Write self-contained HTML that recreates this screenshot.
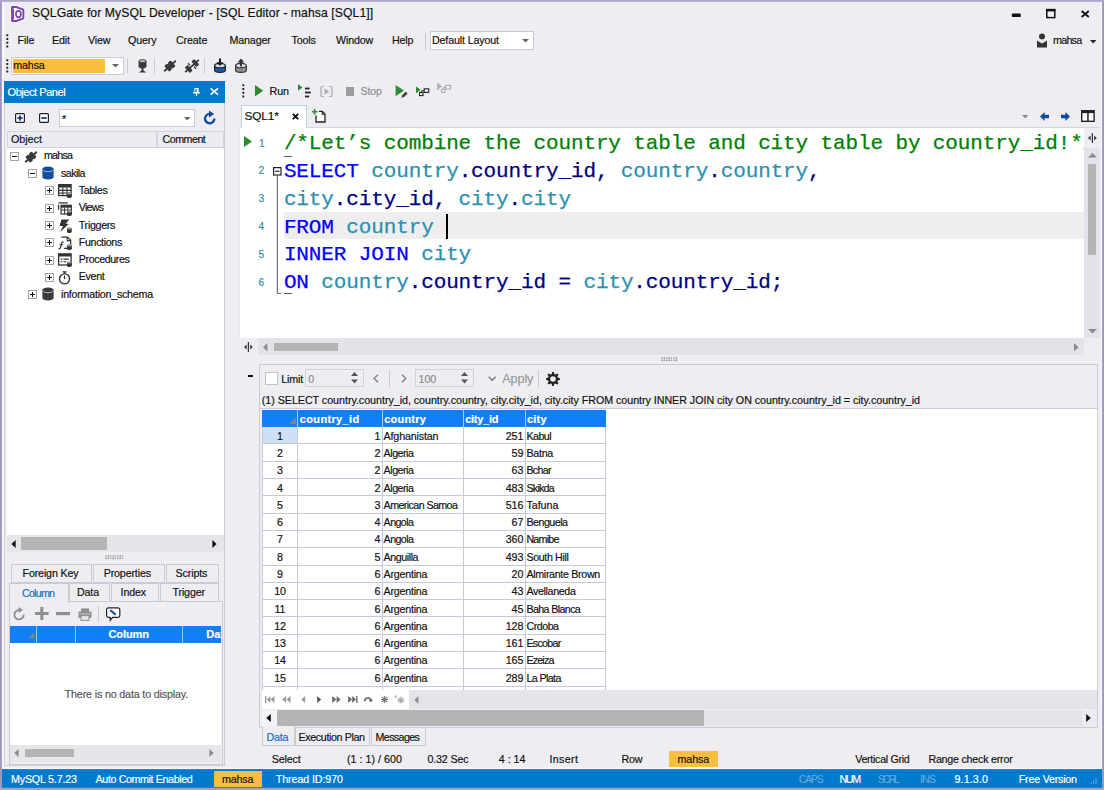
<!DOCTYPE html>
<html lang="en">
<head>
<meta charset="utf-8">
<title>SQLGate for MySQL Developer - [SQL Editor - mahsa [SQL1]]</title>
<style>
*{box-sizing:border-box;margin:0;padding:0}
html,body{width:1104px;height:790px;overflow:hidden}
body{background:#eeeef2;font-family:"Liberation Sans",sans-serif;font-size:10.7px;letter-spacing:-0.15px;color:#111;-webkit-text-stroke:0.18px;position:relative}
.t{position:absolute;white-space:nowrap;line-height:14px;height:14px}
.r{position:absolute}
header,nav,aside,main,section,footer{display:block}
svg{position:absolute;overflow:visible}
.code{position:absolute;white-space:pre;font-family:"Liberation Mono",monospace;font-size:21px;letter-spacing:-0.122px;line-height:28px;height:28px;left:283.9px;-webkit-text-stroke:0.25px}
.kw{color:#0000ff} .id{color:#2b91af} .cm{color:#008000} .op{color:#000080}
.cell{position:absolute;white-space:nowrap;line-height:14px;height:14px}
</style>
</head>
<body>
<div id="window-frame">
<svg style="left:0;top:0" width="1104" height="790" viewBox="0 0 1104 790"><rect x="1.8" y="1.8" width="2.15" height="786" fill="#f7f7fb"/><rect x="1100.9" y="1.8" width="1.3" height="786" fill="#f7f7fb"/><rect x="1.8" y="767.6" width="1100.4" height="1.6" fill="#f7f7fb"/><rect x="0" y="0" width="1.85" height="790" fill="#9a98bd"/><rect x="1102.1" y="0" width="1.9" height="790" fill="#9a98bd"/><rect x="0" y="0" width="1104" height="1.8" fill="#a8a6ca"/><rect x="0" y="787.9" width="1104" height="2.1" fill="#a7a3bd"/></svg>
</div>
<header id="title-bar">
<svg style="left:10px;top:5px" width="16" height="18" viewBox="0 0 16 18">
  <path d="M2 2 H6.2 L13.4 4.7 V13.3 L6.2 16 H2 Z" fill="#fff" stroke="#fff" stroke-width="3.4" stroke-linejoin="round"/>
  <path d="M2 2 H6.2 L13.4 4.7 V13.3 L6.2 16 H2 Z" fill="#fbf8fd" stroke="#7d42b4" stroke-width="1.9" stroke-linejoin="round"/>
  <path d="M3.4 3.6 V14.4" stroke="#7d42b4" stroke-width="1.2"/>
  <ellipse cx="8.4" cy="9.1" rx="2.5" ry="3.3" fill="#fff" stroke="#7d42b4" stroke-width="1.7"/>
</svg>
<div class="t" style="top:5.00px;left:32.00px;font-size:12.2px;line-height:16px;height:16px;letter-spacing:0.085px;">SQLGate for MySQL Developer - [SQL Editor - mahsa [SQL1]]</div>
<svg style="left:1011px;top:8px" width="90" height="12" viewBox="0 0 90 12">
  <rect x="0.8" y="5.6" width="9" height="3.4" rx="0.8" fill="#111"/>
  <rect x="35.8" y="1.6" width="8" height="8" fill="none" stroke="#111" stroke-width="1.5"/>
  <rect x="35.2" y="1" width="9.2" height="2.4" fill="#111"/>
  <path d="M70.6 3 L77.8 9 M77.8 3 L70.6 9" stroke="#111" stroke-width="1.9" fill="none"/>
</svg>
</header>
<nav id="menu-bar">
<svg style="left:5.8px;top:34.2px" width="3" height="14" viewBox="0 0 3 14"><rect x="0.3" y="0.20" width="2" height="2" rx="0.4" fill="#222"/><rect x="0.3" y="3.95" width="2" height="2" rx="0.4" fill="#222"/><rect x="0.3" y="7.70" width="2" height="2" rx="0.4" fill="#222"/><rect x="0.3" y="11.45" width="2" height="2" rx="0.4" fill="#222"/></svg>
<div class="t" style="top:33.00px;left:17.60px;">File</div>
<div class="t" style="top:33.00px;left:52.00px;">Edit</div>
<div class="t" style="top:33.00px;left:88.00px;">View</div>
<div class="t" style="top:33.00px;left:128.00px;">Query</div>
<div class="t" style="top:33.00px;left:176.00px;">Create</div>
<div class="t" style="top:33.00px;left:229.50px;">Manager</div>
<div class="t" style="top:33.00px;left:291.50px;">Tools</div>
<div class="t" style="top:33.00px;left:336.00px;">Window</div>
<div class="t" style="top:33.00px;left:392.00px;">Help</div>
<div class="r" style="left:425px;top:33px;width:1px;height:17px;background:#c9c9d6;"></div>
<div class="r" style="left:430px;top:31px;width:104px;height:19px;background:#fff;border:1px solid #c9cbdb;"></div>
<div class="t" style="top:33.00px;left:432.00px;">Default Layout</div>
<svg style="left:522px;top:38.5px" width="7" height="4" viewBox="0 0 7 4"><path d="M0 0 H7 L3.5 3.6 Z" fill="#666"/></svg>
<svg style="left:1036px;top:33px" width="12" height="15" viewBox="0 0 12 15">
  <circle cx="6" cy="3.4" r="3" fill="#333"/>
  <path d="M1 7.4 L6 10.5 L11 7.4 V14.6 H1 Z" fill="#333"/>
</svg>
<div class="t" style="top:33.00px;left:1053.00px;letter-spacing:-0.729px;">mahsa</div>
<svg style="left:1090px;top:40px" width="6" height="4" viewBox="0 0 6 4"><path d="M0 0 H6.4 L3.2 3.4 Z" fill="#222"/></svg>
</nav>
<div id="connection-toolbar">
<svg style="left:5.8px;top:58.8px" width="3" height="14" viewBox="0 0 3 14"><rect x="0.3" y="0.20" width="2" height="2" rx="0.4" fill="#222"/><rect x="0.3" y="3.95" width="2" height="2" rx="0.4" fill="#222"/><rect x="0.3" y="7.70" width="2" height="2" rx="0.4" fill="#222"/><rect x="0.3" y="11.45" width="2" height="2" rx="0.4" fill="#222"/></svg>
<div class="r" style="left:11px;top:57px;width:113px;height:18px;background:#fff;border:1px solid #c9cbdb;"></div>
<div class="r" style="left:13px;top:58.5px;width:92px;height:14px;background:#fcbe3e;"></div>
<div class="t" style="top:58.00px;left:13.30px;">mahsa</div>
<svg style="left:112px;top:64px" width="7" height="4" viewBox="0 0 7 4"><path d="M0 0 H7 L3.5 3.6 Z" fill="#666"/></svg>
<div class="r" style="left:127px;top:58px;width:1px;height:16px;background:#cdcddb;"></div>
<svg style="left:137.5px;top:58.6px" width="9" height="14" viewBox="0 0 9 14">
  <path d="M0.5 2 V7.6 A4 1.8 0 0 0 8.5 7.6 V2 Z" fill="#3a3a3a"/>
  <ellipse cx="4.5" cy="2.1" rx="3.6" ry="1.5" fill="#c4c4c4" stroke="#3a3a3a" stroke-width="0.9"/>
  <rect x="3.6" y="9" width="1.8" height="2.6" fill="#333"/>
  <path d="M0.8 13.4 L4.5 10.8 L8.2 13.4 Z" fill="#333"/>
</svg>
<div class="r" style="left:154.4px;top:58px;width:1px;height:16px;background:#cdcddb;"></div>
<svg style="left:164px;top:60px" width="12" height="12" viewBox="0 0 12 12"><g transform="rotate(-42 6 6)" fill="#3a3a3a"><rect x="-1.8" y="5.1" width="15.6" height="1.8"/><rect x="1.6" y="2.2" width="4" height="7.6" rx="1"/><rect x="6.2" y="2.2" width="4" height="7.6" rx="1"/><rect x="5" y="3.4" width="2" height="5.2"/></g></svg>
<svg style="left:185px;top:59px" width="14" height="14" viewBox="0 0 14 14"><g transform="rotate(-42 7 7)" fill="#3a3a3a"><rect x="-2.2" y="6.1" width="18.4" height="1.8"/><rect x="0.6" y="3.2" width="4" height="7.6" rx="1"/><rect x="9.4" y="3.2" width="4" height="7.6" rx="1"/><rect x="5.2" y="2.2" width="1.4" height="3"/><rect x="7.4" y="8.8" width="1.4" height="3"/></g></svg>
<div class="r" style="left:204.3px;top:58px;width:1px;height:16px;background:#cdcddb;"></div>
<svg style="left:213.6px;top:57.6px" width="12" height="15" viewBox="0 0 12 15">
  <path d="M0.6 7.6 V12.2 A5.4 2.2 0 0 0 11.4 12.2 V7.6 Z" fill="#1f5aa8" stroke="#1c1c1c" stroke-width="1.1"/>
  <ellipse cx="6" cy="7.6" rx="5.4" ry="2.2" fill="#e6e6ee" stroke="#1c1c1c" stroke-width="1.1"/>
  <path d="M5 0.6 H7 V4.2 H9.4 L6 8 L2.6 4.2 H5 Z" fill="#1c1c1c"/>
</svg>
<svg style="left:235.4px;top:57.6px" width="12" height="15" viewBox="0 0 12 15">
  <path d="M0.6 7.6 V12.2 A5.4 2.2 0 0 0 11.4 12.2 V7.6 Z" fill="#8d8d8d" stroke="#333" stroke-width="1.1"/>
  <ellipse cx="6" cy="7.6" rx="5.4" ry="2.2" fill="#e6e6ee" stroke="#333" stroke-width="1.1"/>
  <path d="M5 8.4 H7 V4.4 H9.4 L6 0.4 L2.6 4.4 H5 Z" fill="#333"/>
</svg>
</div>
<aside id="object-panel">
<div class="r" style="left:4px;top:81px;width:221.4px;height:685px;background:#eeeef2;border:1px solid #ccced9;"></div>
<div class="r" style="left:4px;top:81px;width:221.2px;height:21.6px;background:#007acc;"></div>
<div class="t" style="top:85.00px;left:7.60px;font-size:11px;line-height:14px;height:14px;color:#fff;letter-spacing:-0.453px;">Object Panel</div>
<svg style="left:192.6px;top:88px" width="7" height="8" viewBox="0 0 7 8"><path d="M1.4 0 H5.6 V4.2 H7 V5.4 H4.1 V8 H2.9 V5.4 H0 V4.2 H1.4 Z" fill="#fff"/><rect x="2.4" y="1" width="1.3" height="3.2" fill="#007acc"/></svg>
<svg style="left:210px;top:88.2px" width="8.6" height="7" viewBox="0 0 8.6 7"><path d="M0.6 0.3 L8 6.7 M8 0.3 L0.6 6.7" stroke="#fff" stroke-width="1.7" fill="none"/></svg>
<svg style="left:15px;top:112.6px" width="10" height="10" viewBox="0 0 10 10"><rect x="0.6" y="0.6" width="8.8" height="8.8" rx="1" fill="#fff" stroke="#222" stroke-width="1.2"/><rect x="2.4" y="4.1" width="5.2" height="1.8" fill="#0d3e8e"/><rect x="4.1" y="2.4" width="1.8" height="5.2" fill="#0d3e8e"/></svg>
<svg style="left:38.6px;top:112.6px" width="10" height="10" viewBox="0 0 10 10"><rect x="0.6" y="0.6" width="8.8" height="8.8" rx="1" fill="#fff" stroke="#222" stroke-width="1.2"/><rect x="2.4" y="4.1" width="5.2" height="1.8" fill="#0d3e8e"/></svg>
<div class="r" style="left:59px;top:109px;width:136px;height:18px;background:#fff;border:1px solid #c9cbdb;"></div>
<div class="t" style="top:112.00px;left:62.00px;">*</div>
<svg style="left:183.6px;top:116.9px" width="6.2" height="3.8" viewBox="0 0 6.2 3.8"><path d="M0 0 H6.4 L3.2 3.4 Z" fill="#666"/></svg>
<svg style="left:203.4px;top:110.6px" width="14" height="14" viewBox="0 0 14 14"><path d="M11.4 7.6 A4.7 4.7 0 1 1 6.8 2.9" fill="none" stroke="#114a9c" stroke-width="2.3"/><path d="M6 -0.6 L11.2 3 L6 6.6 Z" fill="#114a9c"/></svg>
<div class="r" style="left:7px;top:131px;width:217px;height:17px;background:#ebebf1;border:1px solid #d4d4e0;"></div>
<div class="r" style="left:156px;top:131px;width:2px;height:17px;background:#eeeef2;border-left:1px solid #d4d4e0;border-right:1px solid #d4d4e0;"></div>
<div class="t" style="top:132.00px;left:11.00px;letter-spacing:-0.005px;">Object</div>
<div class="t" style="top:132.00px;left:162.50px;letter-spacing:-0.497px;">Comment</div>
<div class="r" style="left:7px;top:148px;width:217px;height:387px;background:#fff;"></div>
<svg style="left:10.3px;top:151.8px" width="9" height="9" viewBox="0 0 9 9"><rect x="0.5" y="0.5" width="8" height="8" fill="#fff" stroke="#a4a4a4" stroke-width="1"/><rect x="2" y="4" width="5" height="1" fill="#111"/></svg>
<svg style="left:25px;top:150.8px" width="12" height="12" viewBox="0 0 12 12"><g transform="rotate(-42 6 6)" fill="#3a3a3a"><rect x="-1.8" y="5.1" width="15.6" height="1.8"/><rect x="1.6" y="2.2" width="4" height="7.6" rx="1"/><rect x="6.2" y="2.2" width="4" height="7.6" rx="1"/><rect x="5" y="3.4" width="2" height="5.2"/></g></svg>
<div class="t" style="top:148.00px;left:43.90px;letter-spacing:-0.729px;">mahsa</div>
<svg style="left:27.7px;top:169.1px" width="9" height="9" viewBox="0 0 9 9"><rect x="0.5" y="0.5" width="8" height="8" fill="#fff" stroke="#a4a4a4" stroke-width="1"/><rect x="2" y="4" width="5" height="1" fill="#111"/></svg>
<svg style="left:42px;top:166.1px" width="12" height="14" viewBox="0 0 12 14"><path d="M0.4 3 V11 A5.6 2.6 0 0 0 11.6 11 V3 Z" fill="#154c9a"/><ellipse cx="6" cy="3" rx="5.6" ry="2.6" fill="#154c9a"/><path d="M1 3.6 A5 2.1 0 0 0 11 3.6" fill="none" stroke="#9fc0ea" stroke-width="0.9"/></svg>
<div class="t" style="top:166.00px;left:61.00px;letter-spacing:-0.571px;">sakila</div>
<svg style="left:45px;top:186.4px" width="9" height="9" viewBox="0 0 9 9"><rect x="0.5" y="0.5" width="8" height="8" fill="#fff" stroke="#a4a4a4" stroke-width="1"/><rect x="2" y="4" width="5" height="1" fill="#111"/><rect x="4" y="2" width="1" height="5" fill="#111"/></svg>
<svg style="left:58.4px;top:184.2px" width="14.2" height="14.2" viewBox="0 0 13 13"><rect x="0.6" y="0.6" width="11.4" height="10" fill="#fff" stroke="#333" stroke-width="1.2"/><rect x="0.6" y="0.6" width="11.4" height="2.6" fill="#333"/><path d="M0.6 5.8 H12 M0.6 8.2 H12 M4.4 3 V10.6 M8.2 3 V10.6" stroke="#333" stroke-width="1"/><g transform="translate(8.2,7.4)"><path d="M0 1.2 V4.4 A2.2 1 0 0 0 4.4 4.4 V1.2 Z" fill="#333"/><ellipse cx="2.2" cy="1.2" rx="2.2" ry="1" fill="#999"/></g></svg>
<div class="t" style="top:183.00px;left:78.80px;letter-spacing:-0.386px;">Tables</div>
<svg style="left:45px;top:203.7px" width="9" height="9" viewBox="0 0 9 9"><rect x="0.5" y="0.5" width="8" height="8" fill="#fff" stroke="#a4a4a4" stroke-width="1"/><rect x="2" y="4" width="5" height="1" fill="#111"/><rect x="4" y="2" width="1" height="5" fill="#111"/></svg>
<svg style="left:58.4px;top:201.5px" width="14.2" height="14.2" viewBox="0 0 13 13"><path d="M0.5 0.8 H9 M0.5 2.6 V7" stroke="#333" stroke-width="1.2" fill="none"/><rect x="2.8" y="3" width="9.4" height="8" fill="#fff" stroke="#333" stroke-width="1.1"/><rect x="2.8" y="3" width="9.4" height="2.2" fill="#333"/><path d="M2.8 7.4 H12 M6 5 V11 M9 5 V11" stroke="#333" stroke-width="0.9"/><g transform="translate(8.2,7.4)"><path d="M0 1.2 V4.4 A2.2 1 0 0 0 4.4 4.4 V1.2 Z" fill="#333"/><ellipse cx="2.2" cy="1.2" rx="2.2" ry="1" fill="#999"/></g></svg>
<div class="t" style="top:200.00px;left:78.80px;letter-spacing:-0.762px;">Views</div>
<svg style="left:45px;top:221.0px" width="9" height="9" viewBox="0 0 9 9"><rect x="0.5" y="0.5" width="8" height="8" fill="#fff" stroke="#a4a4a4" stroke-width="1"/><rect x="2" y="4" width="5" height="1" fill="#111"/><rect x="4" y="2" width="1" height="5" fill="#111"/></svg>
<svg style="left:58.4px;top:218.8px" width="14.2" height="14.2" viewBox="0 0 13 13"><path d="M3.2 0.4 H10.4 L7 4.4 H10 L2 12 L4.6 6.4 H1.4 Z" fill="#333"/><g transform="translate(8.2,7.4)"><path d="M0 1.2 V4.4 A2.2 1 0 0 0 4.4 4.4 V1.2 Z" fill="#333"/><ellipse cx="2.2" cy="1.2" rx="2.2" ry="1" fill="#999"/></g></svg>
<div class="t" style="top:218.00px;left:78.80px;letter-spacing:-0.306px;">Triggers</div>
<svg style="left:45px;top:238.2px" width="9" height="9" viewBox="0 0 9 9"><rect x="0.5" y="0.5" width="8" height="8" fill="#fff" stroke="#a4a4a4" stroke-width="1"/><rect x="2" y="4" width="5" height="1" fill="#111"/><rect x="4" y="2" width="1" height="5" fill="#111"/></svg>
<svg style="left:58.4px;top:236.0px" width="14.2" height="14.2" viewBox="0 0 13 13"><path d="M3 1 H8.6 L11.6 4 V11.4 H5.4" fill="none" stroke="#333" stroke-width="1.1"/><path d="M8.4 1 V4.2 H11.6" fill="none" stroke="#333" stroke-width="1"/><path d="M0.4 11.6 C2.2 12 2.4 10.6 2.8 8.6 C3.2 6.4 3.4 5.2 5.2 5.6 M1.4 8 H4.6" stroke="#333" stroke-width="1.1" fill="none"/><g transform="translate(8.2,7.4)"><path d="M0 1.2 V4.4 A2.2 1 0 0 0 4.4 4.4 V1.2 Z" fill="#333"/><ellipse cx="2.2" cy="1.2" rx="2.2" ry="1" fill="#999"/></g></svg>
<div class="t" style="top:235.00px;left:78.80px;letter-spacing:-0.361px;">Functions</div>
<svg style="left:45px;top:255.5px" width="9" height="9" viewBox="0 0 9 9"><rect x="0.5" y="0.5" width="8" height="8" fill="#fff" stroke="#a4a4a4" stroke-width="1"/><rect x="2" y="4" width="5" height="1" fill="#111"/><rect x="4" y="2" width="1" height="5" fill="#111"/></svg>
<svg style="left:58.4px;top:253.3px" width="14.2" height="14.2" viewBox="0 0 13 13"><rect x="0.6" y="0.8" width="11.4" height="10.2" fill="#fff" stroke="#333" stroke-width="1.2"/><rect x="0.6" y="0.8" width="11.4" height="2.4" fill="#333"/><path d="M2.4 5.6 H4 M5 5.6 H9.8 M2.4 8 H4 M5 8 H7.4" stroke="#333" stroke-width="1.1"/><g transform="translate(8.2,7.4)"><path d="M0 1.2 V4.4 A2.2 1 0 0 0 4.4 4.4 V1.2 Z" fill="#333"/><ellipse cx="2.2" cy="1.2" rx="2.2" ry="1" fill="#999"/></g></svg>
<div class="t" style="top:252.00px;left:78.80px;letter-spacing:-0.402px;">Procedures</div>
<svg style="left:45px;top:272.8px" width="9" height="9" viewBox="0 0 9 9"><rect x="0.5" y="0.5" width="8" height="8" fill="#fff" stroke="#a4a4a4" stroke-width="1"/><rect x="2" y="4" width="5" height="1" fill="#111"/><rect x="4" y="2" width="1" height="5" fill="#111"/></svg>
<svg style="left:58.4px;top:270.6px" width="14.2" height="14.2" viewBox="0 0 13 13"><circle cx="6" cy="7.2" r="4.6" fill="#fff" stroke="#333" stroke-width="1.3"/><path d="M6 7.4 V4.2" stroke="#333" stroke-width="1.2"/><path d="M4.2 0.8 H7.8 M6 0.8 V2.6" stroke="#333" stroke-width="1.3"/></svg>
<div class="t" style="top:269.00px;left:78.80px;letter-spacing:-0.34px;">Event</div>
<svg style="left:27.7px;top:290.1px" width="9" height="9" viewBox="0 0 9 9"><rect x="0.5" y="0.5" width="8" height="8" fill="#fff" stroke="#a4a4a4" stroke-width="1"/><rect x="2" y="4" width="5" height="1" fill="#111"/><rect x="4" y="2" width="1" height="5" fill="#111"/></svg>
<svg style="left:42px;top:287.1px" width="12" height="14" viewBox="0 0 12 14"><path d="M0.4 3 V11 A5.6 2.6 0 0 0 11.6 11 V3 Z" fill="#3a3a3a"/><ellipse cx="6" cy="3" rx="5.6" ry="2.6" fill="#3a3a3a"/><path d="M1 3.6 A5 2.1 0 0 0 11 3.6" fill="none" stroke="#c8c8c8" stroke-width="0.9"/></svg>
<div class="t" style="top:287.00px;left:61.00px;letter-spacing:-0.244px;">information_schema</div>
<div class="r" style="left:7px;top:535px;width:217px;height:17px;background:#e6e6ea;"></div>
<svg style="left:11px;top:539.5px" width="5" height="8" viewBox="0 0 5 8"><path d="M4.6 0 V8 L0.4 4 Z" fill="#111"/></svg>
<svg style="left:212px;top:539.5px" width="5" height="8" viewBox="0 0 5 8"><path d="M0.4 0 V8 L4.6 4 Z" fill="#111"/></svg>
<div class="r" style="left:21px;top:537px;width:86px;height:13px;background:#b4b4b4;"></div>
<div class="r" style="left:105px;top:555px;width:19px;height:5px;background-image:radial-gradient(circle at 1px 1px,#9a9aa6 0.7px,transparent 0.9px);background-size:2.4px 2.4px;"></div>
</aside>
<aside id="detail-panel">
<div class="r" style="left:9px;top:601px;width:214px;height:164px;background:#eeeef2;border:1px solid #c9cbdb;"></div>
<div class="r" style="left:10.5px;top:563.5px;width:81px;height:19px;background:#eeeef2;border:1px solid #c9cbdb;"></div>
<div class="t" style="top:566.00px;left:22.50px;">Foreign Key</div>
<div class="r" style="left:92.5px;top:563.5px;width:72px;height:19px;background:#eeeef2;border:1px solid #c9cbdb;"></div>
<div class="t" style="top:566.00px;left:103.70px;">Properties</div>
<div class="r" style="left:165.5px;top:563.5px;width:53px;height:19px;background:#eeeef2;border:1px solid #c9cbdb;"></div>
<div class="t" style="top:566.00px;left:175.60px;">Scripts</div>
<div class="r" style="left:68.5px;top:582.5px;width:41.5px;height:19px;background:#eeeef2;border:1px solid #c9cbdb;"></div>
<div class="t" style="top:585.00px;left:77.00px;">Data</div>
<div class="r" style="left:110.5px;top:582.5px;width:48px;height:19px;background:#eeeef2;border:1px solid #c9cbdb;"></div>
<div class="t" style="top:585.00px;left:120.60px;">Index</div>
<div class="r" style="left:159.5px;top:582.5px;width:59px;height:19px;background:#eeeef2;border:1px solid #c9cbdb;"></div>
<div class="t" style="top:585.00px;left:172.50px;">Trigger</div>
<div class="r" style="left:9px;top:582.5px;width:59.5px;height:20px;background:#eeeef2;border:1px solid #c9cbdb;border-bottom:none;"></div>
<div class="t" style="top:586.00px;left:22.00px;color:#0e70c0;letter-spacing:-0.774px;">Column</div>
<svg style="left:13px;top:607px" width="13" height="14" viewBox="0 0 13 14"><path d="M10.8 7.6 A4.7 4.7 0 1 1 6.2 3" fill="none" stroke="#8f8f8f" stroke-width="1.8"/><path d="M5.6 0 L10 3 L5.6 6 Z" fill="#8f8f8f"/></svg>
<svg style="left:34.5px;top:607px" width="14" height="13" viewBox="0 0 14 13"><rect x="0" y="5" width="13.6" height="3" fill="#8f8f8f"/><rect x="5.3" y="0" width="3" height="13" fill="#8f8f8f"/></svg>
<svg style="left:56px;top:611px" width="14" height="5" viewBox="0 0 14 5"><rect x="0" y="1" width="14" height="3.2" fill="#8f8f8f"/></svg>
<svg style="left:78px;top:607.6px" width="14" height="13" viewBox="0 0 14 13"><rect x="3" y="0.4" width="8" height="4" fill="#8f8f8f"/><rect x="0.4" y="3.6" width="13.2" height="6.4" rx="1" fill="#8f8f8f"/><rect x="3" y="7.6" width="8" height="4.8" fill="#e4e4e8" stroke="#8f8f8f" stroke-width="1"/><rect x="1" y="5.4" width="12" height="1" fill="#c4c4c4"/></svg>
<div class="r" style="left:98px;top:606px;width:1px;height:16px;background:#c9c9d6;"></div>
<svg style="left:105.5px;top:607px" width="15" height="15" viewBox="0 0 15 15"><path d="M2.4 0.8 H12 A1.8 1.8 0 0 1 13.8 2.6 V8.6 A1.8 1.8 0 0 1 12 10.4 H6.6 L4.2 13.4 V10.4 H2.4 A1.8 1.8 0 0 1 0.6 8.6 V2.6 A1.8 1.8 0 0 1 2.4 0.8 Z" fill="#fff" stroke="#222" stroke-width="1.2"/><path d="M4.2 3 L9.6 7.6" stroke="#1a4f9c" stroke-width="2.2"/><path d="M10.4 8.4 L9 7 L10.6 8.8Z" fill="#222"/></svg>
<div class="r" style="left:9.7px;top:625.6px;width:211px;height:120px;background:#fff;"></div>
<div class="r" style="left:9.7px;top:625.6px;width:211px;height:17.1px;background:#0f80fa;"></div>
<div class="r" style="left:36.3px;top:625.6px;width:1.2px;height:17.1px;background:#9cc4f4;"></div>
<div class="r" style="left:74.9px;top:625.6px;width:1.2px;height:17.1px;background:#9cc4f4;"></div>
<div class="r" style="left:182.1px;top:625.6px;width:1.2px;height:17.1px;background:#9cc4f4;"></div>
<svg style="left:28px;top:632px" width="7" height="7" viewBox="0 0 7 7"><path d="M6.4 0.4 V6.4 H0.4 Z" fill="#8a8478"/></svg>
<div class="t" style="top:627.00px;left:108.50px;font-size:11px;line-height:14px;height:14px;color:#fff;letter-spacing:-0.1px;font-weight:bold;">Column</div>
<div class="r" style="left:183.3px;top:625.6px;width:37.4px;height:16.7px;overflow:hidden"><div class="t" style="left:23px;top:1.6px;color:#fff;font-weight:bold;font-size:11px;letter-spacing:-0.1px">Data Type</div></div>
<div class="t" style="top:687.00px;left:64.70px;color:#555;">There is no data to display.</div>
<div class="r" style="left:9.7px;top:745px;width:211px;height:16.5px;background:#e6e6ea;"></div>
<svg style="left:14px;top:749.3px" width="5" height="8" viewBox="0 0 5 8"><path d="M4.6 0 V8 L0.4 4 Z" fill="#8a8a8a"/></svg>
<svg style="left:209px;top:749.3px" width="5" height="8" viewBox="0 0 5 8"><path d="M0.4 0 V8 L4.6 4 Z" fill="#8a8a8a"/></svg>
<div class="r" style="left:25px;top:749px;width:49px;height:8.4px;background:#b4b4b4;"></div>
</aside>
<div id="sql-toolbar">
<svg style="left:242.4px;top:83.8px" width="3" height="14" viewBox="0 0 3 14"><rect x="0.3" y="0.20" width="2" height="2" rx="0.4" fill="#222"/><rect x="0.3" y="3.95" width="2" height="2" rx="0.4" fill="#222"/><rect x="0.3" y="7.70" width="2" height="2" rx="0.4" fill="#222"/><rect x="0.3" y="11.45" width="2" height="2" rx="0.4" fill="#222"/></svg>
<svg style="left:254.6px;top:85.4px" width="8.2" height="11.4" viewBox="0 0 8.2 11.4"><path d="M0 0 L8.2 5.7 L0 11.4 Z" fill="#2f8a2f"/></svg>
<div class="t" style="top:84.00px;left:269.60px;">Run</div>
<svg style="left:297.8px;top:84px" width="13" height="13" viewBox="0 0 13 13"><path d="M0 0 L4.4 3.4 L0 6.8 Z" fill="#2f8a2f"/><rect x="7" y="3.6" width="4.6" height="1.8" fill="#222"/><rect x="7" y="7.6" width="5.8" height="1.8" fill="#222"/><rect x="7" y="11.6" width="4.2" height="1.8" fill="#222"/></svg>
<svg style="left:320px;top:86px" width="13" height="11" viewBox="0 0 13 11"><path d="M3.6 0.5 H2.2 Q1 0.5 1 1.8 V9.2 Q1 10.5 2.2 10.5 H3.6 M9.4 0.5 H10.8 Q12 0.5 12 1.8 V9.2 Q12 10.5 10.8 10.5 H9.4" fill="none" stroke="#a2a2a2" stroke-width="1.1"/><path d="M4.6 2.4 L9.2 5.5 L4.6 8.6 Z" fill="#a8a8a8"/></svg>
<div class="r" style="left:345.6px;top:87px;width:8.6px;height:8.6px;background:#9c9c9c;"></div>
<div class="t" style="top:84.00px;left:360.50px;color:#8c8c8c;">Stop</div>
<svg style="left:394.6px;top:85px" width="13" height="13" viewBox="0 0 13 13"><path d="M0.6 0 L9 5.6 L0.6 11.2 Z" fill="#2f8a2f"/><path d="M6.4 12.8 L7.2 10.2 L10.6 6.8 L12.6 8.6 L9 12 Z" fill="#3a3a3a"/></svg>
<svg style="left:416px;top:86px" width="14" height="12" viewBox="0 0 14 12"><path d="M0 0.4 L4.6 3.8 L0 7.2 Z" fill="#2f8a2f"/><rect x="8.2" y="2.8" width="4.6" height="3.6" fill="#f4f4f8" stroke="#222" stroke-width="1.1"/><rect x="3.6" y="6.4" width="3.4" height="3.2" fill="#f4f4f8" stroke="#222" stroke-width="1.1"/><path d="M5.6 6.2 V4.8 H8" fill="none" stroke="#222" stroke-width="1"/></svg>
<svg style="left:437px;top:83px" width="15" height="12" viewBox="0 0 15 12"><path d="M1 0.2 L5 3.4 L1 6.6 Z" fill="#b0b0b0"/><rect x="0.2" y="0" width="1" height="7" fill="#a8a8a8"/><rect x="8.8" y="2.4" width="4.8" height="3.6" fill="#f4f4f8" stroke="#a4a4a4" stroke-width="1"/><rect x="4.6" y="6.2" width="3.4" height="3.2" fill="#f4f4f8" stroke="#a4a4a4" stroke-width="1"/><path d="M6.4 6 V4.4 H8.6" fill="none" stroke="#a4a4a4" stroke-width="1"/></svg>
</div>
<div id="editor-tabs">
<div class="r" style="left:239px;top:127px;width:861px;height:1px;background:#d2d4e4;"></div>
<div class="r" style="left:240.7px;top:105.3px;width:66.3px;height:22.7px;background:#fff;border:1px solid #bfd0ea;border-bottom:none;"></div>
<div class="t" style="top:109.00px;left:244.50px;font-size:11.8px;line-height:15px;height:15px;letter-spacing:-0.1px;">SQL1*</div>
<svg style="left:292.2px;top:113.4px" width="7" height="7" viewBox="0 0 7 7"><path d="M0.8 0.8 L6.2 6.2 M6.2 0.8 L0.8 6.2" stroke="#111" stroke-width="1.9" fill="none"/></svg>
<svg style="left:311.5px;top:108.6px" width="14" height="14" viewBox="0 0 14 14"><path d="M2.6 0 V5.6 M0 2.8 H5.4" stroke="#2f8a2f" stroke-width="1.6"/><path d="M7 2.4 H10.4 L13 5 V13 H4 V6.6" fill="#fff" stroke="#222" stroke-width="1.3"/><path d="M10.2 2.4 V5.2 H13" fill="none" stroke="#222" stroke-width="1.1"/></svg>
<svg style="left:1022px;top:115px" width="7" height="4" viewBox="0 0 7 4"><path d="M0 0 H6.4 L3.2 3.4 Z" fill="#888"/></svg>
<svg style="left:1040px;top:111.6px" width="9" height="9" viewBox="0 0 9 9"><path d="M0 4.5 L4.6 0 V2.8 H9 V6.2 H4.6 V9 Z" fill="#124a9c"/></svg>
<svg style="left:1061.4px;top:111.6px" width="9" height="9" viewBox="0 0 9 9"><path d="M9 4.5 L4.4 0 V2.8 H0 V6.2 H4.4 V9 Z" fill="#124a9c"/></svg>
<svg style="left:1080.8px;top:110px" width="14" height="12" viewBox="0 0 14 12"><rect x="0.7" y="0.7" width="12.4" height="10.6" fill="#fff" stroke="#222" stroke-width="1.4"/><rect x="0.7" y="0.7" width="12.4" height="2.4" fill="#222"/><rect x="6.2" y="1" width="1.5" height="10" fill="#222"/></svg>
</div>
<main id="sql-editor">
<div class="r" style="left:239px;top:128px;width:861px;height:227px;background:#eeeef2;"></div>
<div class="r" style="left:239px;top:128px;width:1px;height:210px;background:#e4e7f2;"></div>
<div class="r" style="left:240px;top:128px;width:844px;height:210px;background:#fff;"></div>
<div class="r" style="left:283.5px;top:211.8px;width:800.5px;height:27.6px;background:#eeeeee;"></div>
<div class="r" style="left:446px;top:213.5px;width:1.6px;height:25.5px;background:#000;"></div>
<svg style="left:243.5px;top:136px" width="8" height="11" viewBox="0 0 8 11"><path d="M0 0 L8 5.5 L0 11 Z" fill="#2f8a2f"/></svg>
<div class="t" style="top:137.00px;left:259.00px;font-size:10.2px;line-height:13px;height:13px;color:#2b91af;letter-spacing:0px;">1</div>
<div class="t" style="top:164.00px;left:258.60px;font-size:10.2px;line-height:13px;height:13px;color:#2b91af;letter-spacing:0px;">2</div>
<div class="t" style="top:192.00px;left:258.60px;font-size:10.2px;line-height:13px;height:13px;color:#2b91af;letter-spacing:0px;">3</div>
<div class="t" style="top:220.00px;left:258.60px;font-size:10.2px;line-height:13px;height:13px;color:#2b91af;letter-spacing:0px;">4</div>
<div class="t" style="top:248.00px;left:258.60px;font-size:10.2px;line-height:13px;height:13px;color:#2b91af;letter-spacing:0px;">5</div>
<div class="t" style="top:276.00px;left:258.60px;font-size:10.2px;line-height:13px;height:13px;color:#2b91af;letter-spacing:0px;">6</div>
<svg style="left:273px;top:167px" width="9" height="128" viewBox="0 0 9 128"><rect x="0.6" y="0.6" width="7.4" height="7.4" fill="#fff" stroke="#222" stroke-width="1.2"/><rect x="2.2" y="3.7" width="4.2" height="1.2" fill="#222"/><path d="M4.3 8.4 V126.4 H8" fill="none" stroke="#555" stroke-width="1"/></svg>
<div class="r" style="left:284px;top:155.6px;width:7.6px;height:1px;background:#555;"></div>
<div class="r" style="left:284px;top:293px;width:7.6px;height:1px;background:#555;"></div>
<div class="r" style="left:240px;top:128px;width:844px;height:210px;overflow:hidden"><div style="position:absolute;left:-240px;top:-128px">
<div class="code" style="top:130px"><span class="cm">/*Let’s combine the country table and city table by country_id!*/</span></div>
<div class="code" style="top:158px"><span class="kw">SELECT</span><span class="id"> country</span><span class="op">.country_id,</span><span class="id"> country</span><span class="op">.</span><span class="id">country</span><span class="op">,</span></div>
<div class="code" style="top:186px"><span class="id">city</span><span class="op">.city_id,</span><span class="id"> city</span><span class="op">.</span><span class="id">city</span></div>
<div class="code" style="top:214px"><span class="kw">FROM</span><span class="id"> country </span></div>
<div class="code" style="top:241px"><span class="kw">INNER JOIN</span><span class="id"> city</span></div>
<div class="code" style="top:269px"><span class="kw">ON</span><span class="id"> country</span><span class="op">.country_id = </span><span class="id">city</span><span class="op">.country_id;</span></div>
</div></div>
<div class="r" style="left:1084px;top:128px;width:16px;height:20px;background:#eeeef2;"></div>
<svg style="left:1087.6px;top:133px" width="8.8" height="10" viewBox="0 0 10 10" preserveAspectRatio="none"><path d="M4.3 0 H5.7 V10 H4.3 Z M0 5 L3 2.4 V7.6 Z M10 5 L7 2.4 V7.6 Z" fill="#333"/></svg>
<div class="r" style="left:1084px;top:148px;width:16px;height:190px;background:#e2e2e8;"></div>
<svg style="left:1087.5px;top:153.4px" width="9" height="4.6" viewBox="0 0 9 4.6"><path d="M0 4.6 H9 L4.5 0 Z" fill="#8c8c8c"/></svg>
<svg style="left:1087.5px;top:328.8px" width="9" height="4.6" viewBox="0 0 9 4.6"><path d="M0 0 H9 L4.5 4.6 Z" fill="#8c8c8c"/></svg>
<div class="r" style="left:1088px;top:164px;width:8px;height:90.6px;background:#b4b4b4;"></div>
<div class="r" style="left:240px;top:338px;width:18px;height:17px;background:#eeeef2;"></div>
<svg style="left:243.6px;top:342.2px" width="8.8" height="10" viewBox="0 0 10 10" preserveAspectRatio="none"><path d="M4.3 0 H5.7 V10 H4.3 Z M0 5 L3 2.4 V7.6 Z M10 5 L7 2.4 V7.6 Z" fill="#333"/></svg>
<div class="r" style="left:258px;top:338px;width:826px;height:17px;background:#e2e2e8;"></div>
<svg style="left:263.2px;top:342.6px" width="4.6" height="8.4" viewBox="0 0 4.6 8.4"><path d="M4.4 0 V8.4 L0 4.2 Z" fill="#8c8c8c"/></svg>
<svg style="left:1074.2px;top:342.6px" width="4.4" height="8.4" viewBox="0 0 4.4 8.4"><path d="M0 0 V8.4 L4.4 4.2 Z" fill="#8c8c8c"/></svg>
<div class="r" style="left:274px;top:342.6px;width:63.5px;height:8.4px;background:#b4b4b4;"></div>
<div class="r" style="left:1084px;top:338px;width:16px;height:17px;background:#eeeef2;"></div>
<div class="r" style="left:661px;top:357px;width:17px;height:5px;background-image:radial-gradient(circle at 1px 1px,#9a9aa6 0.7px,transparent 0.9px);background-size:2.4px 2.4px;"></div>
</main>
<section id="result-panel">
<div class="r" style="left:259px;top:364px;width:839px;height:363.5px;background:#eeeef2;border:1px solid #c9cbdb;"></div>
<div class="r" style="left:260px;top:408.4px;width:837px;height:1px;background:#c9cbdb;"></div>
<div class="r" style="left:247.6px;top:375.4px;width:5.6px;height:1.8px;background:#111;"></div>
<div class="r" style="left:265.4px;top:372.4px;width:12.4px;height:12.4px;background:#fff;border:1px solid #c2c4d4;"></div>
<div class="t" style="top:372.00px;left:281.20px;">Limit</div>
<div class="r" style="left:305px;top:369px;width:58.6px;height:18.4px;background:#eeeef2;border:1px solid #d0d2de;"></div>
<div class="t" style="top:372.00px;left:308.20px;color:#8a8a8a;">0</div>
<svg style="left:351.1px;top:372.4px" width="7" height="12" viewBox="0 0 7 12"><path d="M0 4 H7 L3.5 0 Z M0 7.6 H7 L3.5 11.6 Z" fill="#555"/></svg>
<div class="r" style="left:415.4px;top:369px;width:58.2px;height:18.4px;background:#eeeef2;border:1px solid #d0d2de;"></div>
<div class="t" style="top:372.00px;left:418.60px;color:#8a8a8a;">100</div>
<svg style="left:461.09999999999997px;top:372.4px" width="7" height="12" viewBox="0 0 7 12"><path d="M0 4 H7 L3.5 0 Z M0 7.6 H7 L3.5 11.6 Z" fill="#555"/></svg>
<svg style="left:373px;top:374.4px" width="6" height="9" viewBox="0 0 6 9"><path d="M5 0.6 L1.2 4.4 L5 8.2" fill="none" stroke="#777" stroke-width="1.3"/></svg>
<div class="r" style="left:388.6px;top:370px;width:1px;height:17px;background:#c9c9d6;"></div>
<svg style="left:401px;top:374.4px" width="6" height="9" viewBox="0 0 6 9"><path d="M1 0.6 L4.8 4.4 L1 8.2" fill="none" stroke="#777" stroke-width="1.3"/></svg>
<svg style="left:488px;top:376.4px" width="9" height="6" viewBox="0 0 9 6"><path d="M0.8 0.8 L4.2 4.2 L7.6 0.8" fill="none" stroke="#777" stroke-width="1.4"/></svg>
<div class="t" style="top:371.00px;left:502.30px;font-size:12.6px;line-height:16px;height:16px;color:#9a9a9a;letter-spacing:-0.1px;">Apply</div>
<div class="r" style="left:538.4px;top:370px;width:1px;height:17px;background:#c9c9d6;"></div>
<svg style="left:546px;top:371.6px" width="14" height="14" viewBox="0 0 14 14"><polygon points="13.96,6.23 13.96,7.77 11.80,8.39 11.38,9.41 12.46,11.38 11.38,12.46 9.41,11.38 8.39,11.80 7.77,13.96 6.23,13.96 5.61,11.80 4.59,11.38 2.62,12.46 1.54,11.38 2.62,9.41 2.20,8.39 0.04,7.77 0.04,6.23 2.20,5.61 2.62,4.59 1.54,2.62 2.62,1.54 4.59,2.62 5.61,2.20 6.23,0.04 7.77,0.04 8.39,2.20 9.41,2.62 11.38,1.54 12.46,2.62 11.38,4.59 11.80,5.61" fill="#222"/><circle cx="7" cy="7" r="2.8" fill="#eeeef2"/><circle cx="7" cy="7" r="1.1" fill="none"/></svg>
<div class="t" style="top:393.00px;left:261.80px;letter-spacing:-0.028px;">(1) SELECT country.country_id, country.country, city.city_id, city.city FROM country INNER JOIN city ON country.country_id = city.country_id</div>
<div class="r" style="left:262.4px;top:409.40000000000003px;width:834.4px;height:281.4px;background:#fff;"></div>
<div class="r" style="left:262.4px;top:409.8px;width:343.6px;height:16.8px;background:#0f80fa;"></div>
<div class="r" style="left:297.2px;top:409.8px;width:1.1px;height:16.8px;background:#a9ccf6;"></div>
<div class="r" style="left:381.8px;top:409.8px;width:1.1px;height:16.8px;background:#a9ccf6;"></div>
<div class="r" style="left:462.8px;top:409.8px;width:1.1px;height:16.8px;background:#a9ccf6;"></div>
<div class="r" style="left:524.6px;top:409.8px;width:1.1px;height:16.8px;background:#a9ccf6;"></div>
<svg style="left:288.6px;top:416.6px" width="7.4" height="7.4" viewBox="0 0 7.4 7.4"><path d="M7 0.4 V7 H0.4 Z" fill="#8a8478"/></svg>
<div class="t" style="top:412.00px;left:299.80px;font-size:11px;line-height:14px;height:14px;color:#fff;letter-spacing:0.341px;font-weight:bold;">country_id</div>
<div class="t" style="top:412.00px;left:384.20px;font-size:11px;line-height:14px;height:14px;color:#fff;letter-spacing:0.227px;font-weight:bold;">country</div>
<div class="t" style="top:412.00px;left:465.20px;font-size:11px;line-height:14px;height:14px;color:#fff;letter-spacing:-0.275px;font-weight:bold;">city_id</div>
<div class="t" style="top:412.00px;left:527.00px;font-size:11px;line-height:14px;height:14px;color:#fff;letter-spacing:0.215px;font-weight:bold;">city</div>
<div class="r" style="left:262.4px;top:426.6px;width:34.8px;height:17.28px;background:#cfe0f6;"></div>
<div class="r" style="left:262.4px;top:426.6px;width:1px;height:263.4px;background:#c6c8dc;"></div>
<div class="r" style="left:297.2px;top:426.6px;width:1px;height:263.4px;background:#c6c8dc;"></div>
<div class="r" style="left:381.8px;top:426.6px;width:1px;height:263.4px;background:#c6c8dc;"></div>
<div class="r" style="left:462.8px;top:426.6px;width:1px;height:263.4px;background:#c6c8dc;"></div>
<div class="r" style="left:524.6px;top:426.6px;width:1px;height:263.4px;background:#c6c8dc;"></div>
<div class="r" style="left:605.2px;top:426.6px;width:1px;height:263.4px;background:#c6c8dc;"></div>
<div class="r" style="left:262.4px;top:443.48px;width:343.8px;height:1px;background:#c6c8dc;"></div>
<div class="t" style="left:263px;width:34px;text-align:center;top:428.70px">1</div>
<div class="t" style="top:429.00px;right:723.80px;">1</div>
<div class="t" style="top:429.00px;left:383.60px;letter-spacing:-0.161px;">Afghanistan</div>
<div class="t" style="top:429.00px;right:580.80px;">251</div>
<div class="t" style="top:429.00px;left:526.40px;letter-spacing:-0.517px;">Kabul</div>
<div class="r" style="left:262.4px;top:460.77px;width:343.8px;height:1px;background:#c6c8dc;"></div>
<div class="t" style="left:263px;width:34px;text-align:center;top:445.99px">2</div>
<div class="t" style="top:446.00px;right:723.80px;">2</div>
<div class="t" style="top:446.00px;left:383.60px;letter-spacing:-0.485px;">Algeria</div>
<div class="t" style="top:446.00px;right:580.80px;">59</div>
<div class="t" style="top:446.00px;left:526.40px;letter-spacing:-0.266px;">Batna</div>
<div class="r" style="left:262.4px;top:478.06px;width:343.8px;height:1px;background:#c6c8dc;"></div>
<div class="t" style="left:263px;width:34px;text-align:center;top:463.28px">3</div>
<div class="t" style="top:463.00px;right:723.80px;">2</div>
<div class="t" style="top:463.00px;left:383.60px;letter-spacing:-0.485px;">Algeria</div>
<div class="t" style="top:463.00px;right:580.80px;">63</div>
<div class="t" style="top:463.00px;left:526.40px;letter-spacing:-0.663px;">Bchar</div>
<div class="r" style="left:262.4px;top:495.35px;width:343.8px;height:1px;background:#c6c8dc;"></div>
<div class="t" style="left:263px;width:34px;text-align:center;top:480.57px">4</div>
<div class="t" style="top:481.00px;right:723.80px;">2</div>
<div class="t" style="top:481.00px;left:383.60px;letter-spacing:-0.485px;">Algeria</div>
<div class="t" style="top:481.00px;right:580.80px;">483</div>
<div class="t" style="top:481.00px;left:526.40px;letter-spacing:-0.743px;">Skikda</div>
<div class="r" style="left:262.4px;top:512.64px;width:343.8px;height:1px;background:#c6c8dc;"></div>
<div class="t" style="left:263px;width:34px;text-align:center;top:497.86px">5</div>
<div class="t" style="top:498.00px;right:723.80px;">3</div>
<div class="t" style="top:498.00px;left:383.60px;letter-spacing:-0.59px;">American Samoa</div>
<div class="t" style="top:498.00px;right:580.80px;">516</div>
<div class="t" style="top:498.00px;left:526.40px;letter-spacing:-0.025px;">Tafuna</div>
<div class="r" style="left:262.4px;top:529.93px;width:343.8px;height:1px;background:#c6c8dc;"></div>
<div class="t" style="left:263px;width:34px;text-align:center;top:515.15px">6</div>
<div class="t" style="top:515.00px;right:723.80px;">4</div>
<div class="t" style="top:515.00px;left:383.60px;letter-spacing:-0.584px;">Angola</div>
<div class="t" style="top:515.00px;right:580.80px;">67</div>
<div class="t" style="top:515.00px;left:526.40px;letter-spacing:-0.503px;">Benguela</div>
<div class="r" style="left:262.4px;top:547.22px;width:343.8px;height:1px;background:#c6c8dc;"></div>
<div class="t" style="left:263px;width:34px;text-align:center;top:532.44px">7</div>
<div class="t" style="top:532.00px;right:723.80px;">4</div>
<div class="t" style="top:532.00px;left:383.60px;letter-spacing:-0.584px;">Angola</div>
<div class="t" style="top:532.00px;right:580.80px;">360</div>
<div class="t" style="top:532.00px;left:526.40px;letter-spacing:-0.754px;">Namibe</div>
<div class="r" style="left:262.4px;top:564.51px;width:343.8px;height:1px;background:#c6c8dc;"></div>
<div class="t" style="left:263px;width:34px;text-align:center;top:549.73px">8</div>
<div class="t" style="top:550.00px;right:723.80px;">5</div>
<div class="t" style="top:550.00px;left:383.60px;letter-spacing:-0.439px;">Anguilla</div>
<div class="t" style="top:550.00px;right:580.80px;">493</div>
<div class="t" style="top:550.00px;left:526.40px;letter-spacing:-0.366px;">South Hill</div>
<div class="r" style="left:262.4px;top:581.8px;width:343.8px;height:1px;background:#c6c8dc;"></div>
<div class="t" style="left:263px;width:34px;text-align:center;top:567.02px">9</div>
<div class="t" style="top:567.00px;right:723.80px;">6</div>
<div class="t" style="top:567.00px;left:383.60px;letter-spacing:-0.226px;">Argentina</div>
<div class="t" style="top:567.00px;right:580.80px;">20</div>
<div class="t" style="top:567.00px;left:526.40px;letter-spacing:-0.321px;">Almirante Brown</div>
<div class="r" style="left:262.4px;top:599.09px;width:343.8px;height:1px;background:#c6c8dc;"></div>
<div class="t" style="left:263px;width:34px;text-align:center;top:584.31px">10</div>
<div class="t" style="top:584.00px;right:723.80px;">6</div>
<div class="t" style="top:584.00px;left:383.60px;letter-spacing:-0.226px;">Argentina</div>
<div class="t" style="top:584.00px;right:580.80px;">43</div>
<div class="t" style="top:584.00px;left:526.40px;letter-spacing:-0.361px;">Avellaneda</div>
<div class="r" style="left:262.4px;top:616.38px;width:343.8px;height:1px;background:#c6c8dc;"></div>
<div class="t" style="left:263px;width:34px;text-align:center;top:601.60px">11</div>
<div class="t" style="top:602.00px;right:723.80px;">6</div>
<div class="t" style="top:602.00px;left:383.60px;letter-spacing:-0.226px;">Argentina</div>
<div class="t" style="top:602.00px;right:580.80px;">45</div>
<div class="t" style="top:602.00px;left:526.40px;letter-spacing:-0.618px;">Baha Blanca</div>
<div class="r" style="left:262.4px;top:633.67px;width:343.8px;height:1px;background:#c6c8dc;"></div>
<div class="t" style="left:263px;width:34px;text-align:center;top:618.89px">12</div>
<div class="t" style="top:619.00px;right:723.80px;">6</div>
<div class="t" style="top:619.00px;left:383.60px;letter-spacing:-0.226px;">Argentina</div>
<div class="t" style="top:619.00px;right:580.80px;">128</div>
<div class="t" style="top:619.00px;left:526.40px;letter-spacing:-0.479px;">Crdoba</div>
<div class="r" style="left:262.4px;top:650.96px;width:343.8px;height:1px;background:#c6c8dc;"></div>
<div class="t" style="left:263px;width:34px;text-align:center;top:636.18px">13</div>
<div class="t" style="top:636.00px;right:723.80px;">6</div>
<div class="t" style="top:636.00px;left:383.60px;letter-spacing:-0.226px;">Argentina</div>
<div class="t" style="top:636.00px;right:580.80px;">161</div>
<div class="t" style="top:636.00px;left:526.40px;letter-spacing:-0.709px;">Escobar</div>
<div class="r" style="left:262.4px;top:668.25px;width:343.8px;height:1px;background:#c6c8dc;"></div>
<div class="t" style="left:263px;width:34px;text-align:center;top:653.47px">14</div>
<div class="t" style="top:653.00px;right:723.80px;">6</div>
<div class="t" style="top:653.00px;left:383.60px;letter-spacing:-0.226px;">Argentina</div>
<div class="t" style="top:653.00px;right:580.80px;">165</div>
<div class="t" style="top:653.00px;left:526.40px;letter-spacing:-0.823px;">Ezeiza</div>
<div class="r" style="left:262.4px;top:685.54px;width:343.8px;height:1px;background:#c6c8dc;"></div>
<div class="t" style="left:263px;width:34px;text-align:center;top:670.76px">15</div>
<div class="t" style="top:671.00px;right:723.80px;">6</div>
<div class="t" style="top:671.00px;left:383.60px;letter-spacing:-0.226px;">Argentina</div>
<div class="t" style="top:671.00px;right:580.80px;">289</div>
<div class="t" style="top:671.00px;left:526.40px;letter-spacing:-0.609px;">La Plata</div>
<div class="r" style="left:262.4px;top:690px;width:834.4px;height:19px;background:#e4e4e8;"></div>
<div class="r" style="left:262.4px;top:690px;width:146.4px;height:19px;background:#fff;"></div>
<svg style="left:265px;top:695.6px" width="10" height="8" viewBox="0 0 10 8"><g fill="#9a9a9a"><rect x="0" y="0" width="1.3" height="7"/><path d="M5.4 0 V7 L1.6 3.5 Z M9.4 0 V7 L5.6 3.5 Z"/></g></svg>
<svg style="left:282px;top:695.6px" width="10" height="8" viewBox="0 0 10 8"><g fill="#9a9a9a"><path d="M4.2 0 V7 L0.2 3.5 Z M8.6 0 V7 L4.6 3.5 Z"/></g></svg>
<svg style="left:300.6px;top:695.6px" width="10" height="8" viewBox="0 0 10 8"><g fill="#9a9a9a"><path d="M4.2 0 V7 L0.2 3.5 Z"/></g></svg>
<svg style="left:317.4px;top:695.6px" width="10" height="8" viewBox="0 0 10 8"><g fill="#9a9a9a"><path d="M0.2 0 V7 L4.2 3.5 Z" fill="#555"/></g></svg>
<svg style="left:331.8px;top:695.6px" width="10" height="8" viewBox="0 0 10 8"><g fill="#9a9a9a"><path d="M0.2 0 V7 L4.2 3.5 Z M4.6 0 V7 L8.6 3.5 Z" fill="#666"/></g></svg>
<svg style="left:347.8px;top:695.6px" width="10" height="8" viewBox="0 0 10 8"><g fill="#9a9a9a"><path d="M0.2 0 V7 L4 3.5 Z M4.2 0 V7 L8 3.5 Z" fill="#666"/><rect x="8.2" y="0" width="1.3" height="7" fill="#666"/></g></svg>
<svg style="left:363.6px;top:695.6px" width="10" height="8" viewBox="0 0 10 8"><g fill="#9a9a9a"><path d="M0.8 5.4 A3.2 3.2 0 0 1 7 4" fill="none" stroke="#666" stroke-width="1.5"/><path d="M4.6 3.4 H9 L7 6.6 Z" fill="#666"/></g></svg>
<svg style="left:381px;top:695.6px" width="10" height="8" viewBox="0 0 10 8"><g fill="#9a9a9a"><path d="M3.5 0 V7 M0 3.5 H7 M1 1 L6 6 M6 1 L1 6" stroke="#777" stroke-width="1.1"/></g></svg>
<svg style="left:395.4px;top:695.6px" width="10" height="8" viewBox="0 0 10 8"><g fill="#9a9a9a"><g transform="translate(2.4,0.6)"><path d="M3.5 0 V7 M0 3.5 H7 M1 1 L6 6 M6 1 L1 6" stroke="#aaa" stroke-width="1.1"/></g><rect x="0" y="-0.6" width="1.4" height="2.4" fill="#999"/></g></svg>
<svg style="left:414px;top:695.6px" width="5" height="8" viewBox="0 0 5 8"><path d="M4.4 0 V8 L0.4 4 Z" fill="#8c8c8c"/></svg>
<div class="r" style="left:262.4px;top:709.6px;width:834.4px;height:16.4px;background:#e4e4e8;"></div>
<div class="r" style="left:262.4px;top:709.6px;width:14.6px;height:16.4px;background:#f4f4f8;"></div>
<svg style="left:266px;top:713.6px" width="5" height="8" viewBox="0 0 5 8"><path d="M4.8 0 V8 L0.2 4 Z" fill="#111"/></svg>
<div class="r" style="left:277px;top:709.6px;width:426.6px;height:16.4px;background:#b4b4b4;"></div>
<div class="r" style="left:1081.6px;top:709.6px;width:15.2px;height:16.4px;background:#ececf0;"></div>
<svg style="left:1086.4px;top:713.6px" width="5" height="8" viewBox="0 0 5 8"><path d="M0.2 0 V8 L4.8 4 Z" fill="#111"/></svg>
<div class="r" style="left:294.6px;top:727.4px;width:75.6px;height:18.8px;background:#eeeef2;border:1px solid #c9cbdb;"></div>
<div class="r" style="left:371.4px;top:727.4px;width:54.4px;height:18.8px;background:#eeeef2;border:1px solid #c9cbdb;"></div>
<div class="r" style="left:262px;top:726.4px;width:33px;height:19.8px;background:#eeeef2;border:1px solid #c9cbdb;border-top:none;"></div>
<div class="t" style="top:730.00px;left:266.40px;color:#0e70c0;">Data</div>
<div class="t" style="top:730.00px;left:298.60px;letter-spacing:-0.383px;">Execution Plan</div>
<div class="t" style="top:730.00px;left:375.60px;letter-spacing:-0.638px;">Messages</div>
</section>
<div id="editor-status">
<div class="t" style="top:752.00px;left:271.80px;">Select</div>
<div class="t" style="top:752.00px;left:347.00px;letter-spacing:0.024px;">(1 : 1) / 600</div>
<div class="t" style="top:752.00px;left:427.40px;">0.32 Sec</div>
<div class="t" style="top:752.00px;left:498.80px;letter-spacing:-0.034px;">4 : 14</div>
<div class="t" style="top:752.00px;left:549.60px;letter-spacing:0.308px;">Insert</div>
<div class="t" style="top:752.00px;left:621.40px;">Row</div>
<div class="r" style="left:669.4px;top:751px;width:48.4px;height:16px;background:#fcbe3e;"></div>
<div class="t" style="top:752.00px;left:677.60px;">mahsa</div>
<div class="t" style="top:752.00px;left:855.20px;letter-spacing:-0.298px;">Vertical Grid</div>
<div class="t" style="top:752.00px;left:928.40px;letter-spacing:-0.226px;">Range check error</div>
</div>
<footer id="status-bar">
<svg style="left:0;top:0" width="1104" height="790" viewBox="0 0 1104 790"><rect x="1.9" y="769.1" width="1100.2" height="18.8" fill="#007acc"/></svg>
<div class="t" style="top:772.00px;left:11.00px;color:#fff;letter-spacing:-0.182px;">MySQL 5.7.23</div>
<div class="t" style="top:772.00px;left:95.60px;color:#fff;letter-spacing:-0.377px;">Auto Commit Enabled</div>
<div class="r" style="left:213.8px;top:770.8px;width:48.6px;height:16px;background:#fcbe3e;"></div>
<div class="t" style="top:772.00px;left:222.00px;">mahsa</div>
<div class="t" style="top:772.00px;left:275.80px;color:#fff;letter-spacing:-0.092px;">Thread ID:970</div>
<div class="t" style="top:772.00px;left:798.80px;color:#6aa6d8;letter-spacing:-1.446px;">CAPS</div>
<div class="t" style="top:772.00px;left:839.40px;color:#fff;letter-spacing:-1.334px;">NUM</div>
<div class="t" style="top:772.00px;left:877.80px;color:#6aa6d8;letter-spacing:-2.081px;">SCRL</div>
<div class="t" style="top:772.00px;left:920.00px;color:#6aa6d8;letter-spacing:-0.918px;">INS</div>
<div class="t" style="top:772.00px;left:954.40px;color:#fff;letter-spacing:0.163px;">9.1.3.0</div>
<div class="t" style="top:772.00px;left:1018.80px;color:#fff;letter-spacing:-0.215px;">Free Version</div>
<svg style="left:1089px;top:777px" width="8" height="8" viewBox="0 0 8 8"><path d="M7 1 V7 M4.6 3.4 V7 M2.2 5.6 V7" stroke="#5fa2d8" stroke-width="1.2"/></svg>
</footer>
</body>
</html>
